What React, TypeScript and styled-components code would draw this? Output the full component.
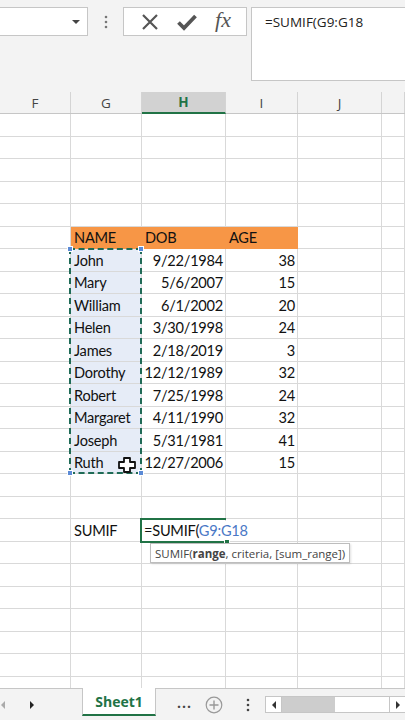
import { FC } from "react";
import styled, { createGlobalStyle } from "styled-components";

const GREEN = "#217346";
const ROW_H = 22.5;

const GlobalStyle = createGlobalStyle`
  html, body { margin: 0; padding: 0; background: #f3f3f3; }
  * { box-sizing: border-box; }
`;

type CellData = { text?: string; align?: "left" | "right"; kind?: "head" | "sel" };

const people: [string, string, string][] = [
  ["John", "9/22/1984", "38"],
  ["Mary", "5/6/2007", "15"],
  ["William", "6/1/2002", "20"],
  ["Helen", "3/30/1998", "24"],
  ["James", "2/18/2019", "3"],
  ["Dorothy", "12/12/1989", "32"],
  ["Robert", "7/25/1998", "24"],
  ["Margaret", "4/11/1990", "32"],
  ["Joseph", "5/31/1981", "41"],
  ["Ruth", "12/27/2006", "15"],
];

const buildRows = (): CellData[][] => {
  const rows: CellData[][] = [];
  for (let r = 0; r < 26; r++) {
    const row: CellData[] = [{}, {}, {}, {}, {}, {}];
    if (r === 5) {
      row[1] = { text: "NAME", kind: "head" };
      row[2] = { text: "DOB", kind: "head" };
      row[3] = { text: "AGE", kind: "head" };
    }
    if (r >= 6 && r <= 15) {
      const p = people[r - 6];
      row[1] = { text: p[0], kind: "sel" };
      row[2] = { text: p[1], align: "right" };
      row[3] = { text: p[2], align: "right" };
    }
    if (r === 18) row[1] = { text: "SUMIF" };
    rows.push(row);
  }
  return rows;
};

const Screen = styled.div`
  width: 405px;
  height: 720px;
  overflow: hidden;
  display: flex;
  flex-direction: column;
  background: #f3f3f3;
  font-family: "Open Sans", "Liberation Sans", sans-serif;
`;

const Toolbar = styled.div`
  height: 92px;
  flex: none;
  display: flex;
  align-items: flex-start;
  padding-top: 7px;
  position: relative;
`;

const NameBox = styled.div`
  width: 90px;
  height: 29px;
  margin-left: -2px;
  background: #fff;
  border: 1px solid #c6c6c6;
  display: flex;
  align-items: center;
  justify-content: flex-end;
  padding-right: 7px;
`;

const Dots = styled.div`
  width: 35px;
  height: 29px;
  display: flex;
  align-items: center;
  justify-content: center;
`;

const FxBox = styled.div`
  width: 124px;
  height: 29px;
  background: #fff;
  border: 1px solid #c6c6c6;
  display: flex;
  align-items: center;
  justify-content: space-around;
  padding: 0 6px 0 8px;
`;

const FxText = styled.span`
  font-family: "Liberation Serif", "DejaVu Serif", serif;
  font-style: italic;
  font-size: 22px;
  color: #555;
  line-height: 1;
  margin-top: -3px;
`;

const FormulaBox = styled.div`
  margin-left: 4px;
  flex: 1;
  height: 74px;
  margin-right: -3px;
  background: #fff;
  border: 1px solid #c6c6c6;
  padding: 5px 0 0 13px;
  font-size: 13.5px;
  color: #222;
`;

const ColHeaders = styled.div`
  height: 22px;
  flex: none;
  display: grid;
  grid-template-columns: 71px 71px 84px 72px 84px 1fr;
  border-bottom: 1px solid #c6c6c6;
`;

const ColHead = styled.div<{ $active?: boolean }>`
  display: flex;
  align-items: center;
  justify-content: center;
  font-size: 13.5px;
  color: ${(p) => (p.$active ? GREEN : "#444")};
  font-weight: ${(p) => (p.$active ? 700 : 400)};
  background: ${(p) => (p.$active ? "#d2d2d2" : "#f3f3f3")};
  border-right: 1px solid #d4d4d4;
  border-bottom: ${(p) => (p.$active ? `2px solid ${GREEN}` : "none")};
  margin-bottom: ${(p) => (p.$active ? "-1px" : "0")};
`;

const SheetBody = styled.div`
  flex: 1;
  position: relative;
  overflow: hidden;
  background: #fff;
`;

const Grid = styled.div`
  display: grid;
  grid-template-columns: 71px 71px 84px 72px 84px 1fr;
  grid-auto-rows: ${ROW_H}px;
  font-family: "Lato", "Liberation Sans", sans-serif;
  font-size: 14.6px;
  letter-spacing: -0.25px;
  color: #111;
`;

const Cell = styled.div<{ $align?: string; $kind?: string }>`
  border-right: 1px solid ${(p) => (p.$kind === "head" ? "#f79646" : "#d9d9d9")};
  border-bottom: 1px solid ${(p) => (p.$kind === "head" ? "#f79646" : "#d9d9d9")};
  background: ${(p) =>
    p.$kind === "head" ? "#f79646" : p.$kind === "sel" ? "#e6ecf7" : "#fff"};
  display: flex;
  align-items: flex-end;
  justify-content: ${(p) => (p.$align === "right" ? "flex-end" : "flex-start")};
  padding: 0 2px 0 3px;
  white-space: nowrap;
  line-height: 20px;
`;

const Selection = styled.div`
  position: absolute;
  left: 69px;
  top: ${6 * ROW_H - 1}px;
  width: 73px;
  height: ${10 * ROW_H + 1}px;
  border: 2px dashed #1f6b56;
  pointer-events: none;
`;

const Handle = styled.div<{ $x: "l" | "r"; $y: "t" | "b"; $color?: string }>`
  position: absolute;
  width: 6px;
  height: 6px;
  background: ${(p) => p.$color ?? "#5b8ad6"};
  border: 1px solid #fff;
  ${(p) => (p.$x === "l" ? "left: -4px;" : "right: -4px;")}
  ${(p) => (p.$y === "t" ? "top: -4px;" : "bottom: -4px;")}
`;

const Cursor = styled.svg`
  position: absolute;
  left: 118px;
  top: ${457 - 114}px;
`;

const EditCell = styled.div`
  position: absolute;
  left: 140px;
  top: ${18 * ROW_H - 1}px;
  width: 86px;
  height: ${ROW_H + 2}px;
  border: 2px solid ${GREEN};
  border-right: none;
  font-family: "Lato", "Liberation Sans", sans-serif;
  font-size: 14.6px;
  letter-spacing: -0.25px;
  color: #111;
  display: flex;
  align-items: flex-end;
  padding: 0 0 0 2px;
  line-height: 20px;
  white-space: nowrap;
`;

const EditText = styled.span`
  background: #fff;
  padding-right: 4px;
`;

const RefText = styled.span`
  color: #4a78c6;
`;

const Tooltip = styled.div`
  position: absolute;
  left: 150px;
  top: ${543 - 114}px;
  height: 20px;
  padding: 0 4px;
  background: #fff;
  border: 1px solid #bdbdbd;
  font-family: "Open Sans", "Liberation Sans", sans-serif;
  font-size: 11.5px;
  color: #444;
  display: flex;
  align-items: center;
  white-space: nowrap;
  box-shadow: 1px 1px 2px rgba(0, 0, 0, 0.12);
`;

const TabBar = styled.div`
  height: 32px;
  flex: none;
  display: flex;
  align-items: stretch;
  background: #f3f3f3;
  border-top: 1px solid #c6c6c6;
`;

const NavArrows = styled.div`
  width: 82px;
  display: flex;
  align-items: center;
  gap: 25px;
  padding-left: 1px;
`;

const SheetTab = styled.div`
  width: 74px;
  margin-top: -1px;
  background: #fff;
  border-left: 1px solid #c6c6c6;
  border-right: 1px solid #c6c6c6;
  border-bottom: 2px solid ${GREEN};
  margin-bottom: 4px;
  display: flex;
  align-items: center;
  justify-content: center;
  font-family: "Open Sans", "Liberation Sans", sans-serif;
  font-weight: 700;
  font-size: 14px;
  color: ${GREEN};
`;

const TabTools = styled.div`
  display: flex;
  align-items: center;
  padding-left: 21px;
  color: #555;
`;

const Ellipsis = styled.span`
  width: 24px;
  font-size: 14px;
  font-weight: 700;
  letter-spacing: 1px;
  color: #444;
  margin-top: -4px;
`;

const Spacer = styled.span<{ $w: number }>`
  width: ${(p) => p.$w}px;
`;

const Scroll = styled.div`
  margin-left: auto;
  align-self: center;
  width: 141px;
  height: 17px;
  display: flex;
  border: 1px solid #c6c6c6;
  background: #fff;
  margin-right: -1px;
`;

const ScrollBtn = styled.div`
  width: 16px;
  display: flex;
  align-items: center;
  justify-content: center;
  background: #fff;
  border-left: 1px solid #c6c6c6;
  border-right: 1px solid #c6c6c6;
  &:first-child { border-left: none; }
  &:last-child { border-right: none; }
`;

const Thumb = styled.div`
  width: 53px;
  background: #cdcdcd;
`;

const Track = styled.div`
  flex: 1;
`;

const Tri: FC<{ dir: "l" | "r" | "d"; color?: string; size?: number }> = ({ dir, color = "#333", size = 5 }) => {
  const s = size;
  const pts =
    dir === "l" ? `${s},0 0,${s} ${s},${2 * s}` : dir === "r" ? `0,0 ${s},${s} 0,${2 * s}` : `0,0 ${2 * s},0 ${s},${s}`;
  const w = dir === "d" ? 2 * s : s;
  const h = dir === "d" ? s : 2 * s;
  return (
    <svg width={w} height={h} viewBox={`0 0 ${w} ${h}`}>
      <polygon points={pts} fill={color} />
    </svg>
  );
};

const VDots: FC<{ color?: string }> = ({ color = "#666" }) => (
  <svg width="4" height="14" viewBox="0 0 4 14">
    <circle cx="2" cy="2" r="1.3" fill={color} />
    <circle cx="2" cy="7" r="1.3" fill={color} />
    <circle cx="2" cy="12" r="1.3" fill={color} />
  </svg>
);

const App: FC = () => {
  const rows = buildRows();
  return (
    <>
      <GlobalStyle />
      <Screen>
        <Toolbar>
          <NameBox>
            <Tri dir="d" color="#444" size={4} />
          </NameBox>
          <Dots>
            <VDots color="#777" />
          </Dots>
          <FxBox>
            <svg width="18" height="18" viewBox="0 0 18 18">
              <path d="M2 2 L16 16 M16 2 L2 16" stroke="#555" strokeWidth="2.2" />
            </svg>
            <svg width="20" height="18" viewBox="0 0 20 18">
              <path d="M1.5 9.5 L7 15 L18.5 3" stroke="#555" strokeWidth="3.8" fill="none" />
            </svg>
            <FxText>fx</FxText>
          </FxBox>
          <FormulaBox>=SUMIF(G9:G18</FormulaBox>
        </Toolbar>

        <ColHeaders>
          {["F", "G", "H", "I", "J", ""].map((c) => (
            <ColHead key={c || "k"} $active={c === "H"}>
              {c}
            </ColHead>
          ))}
        </ColHeaders>

        <SheetBody>
          <Grid>
            {rows.map((row, r) =>
              row.map((cell, c) => (
                <Cell key={`${r}-${c}`} $align={cell.align} $kind={cell.kind}>
                  {cell.text}
                </Cell>
              ))
            )}
          </Grid>

          <Selection>
            <Handle $x="l" $y="t" />
            <Handle $x="r" $y="t" />
            <Handle $x="l" $y="b" />
            <Handle $x="r" $y="b" />
          </Selection>

          <Cursor width="18" height="16" viewBox="0 0 18 16">
            <path
              d="M6 1 H12 V5 H17 V11 H12 V15 H6 V11 H1 V5 H6 Z"
              fill="#fff"
              stroke="#111"
              strokeWidth="1.8"
              strokeLinejoin="round"
            />
          </Cursor>

          <EditCell>
            <EditText>
              =SUMIF(<RefText>G9:G18</RefText>
            </EditText>
            <Handle $x="r" $y="b" $color={GREEN} />
          </EditCell>

          <Tooltip>
            SUMIF(<b>range</b>, criteria, [sum_range])
          </Tooltip>
        </SheetBody>

        <TabBar>
          <NavArrows>
            <Tri dir="l" color="#aaa" size={4} />
            <Tri dir="r" color="#222" size={4} />
          </NavArrows>
          <SheetTab>Sheet1</SheetTab>
          <TabTools>
            <Ellipsis>...</Ellipsis>
            <svg width="18" height="18" viewBox="0 0 18 18" style={{ marginLeft: 4 }}>
              <circle cx="9" cy="9" r="7.8" stroke="#999" strokeWidth="1.2" fill="none" />
              <path d="M9 4.5 V13.5 M4.5 9 H13.5" stroke="#999" strokeWidth="1.4" />
            </svg>
            <Spacer $w={23} />
            <VDots color="#444" />
          </TabTools>
          <Scroll>
            <ScrollBtn>
              <Tri dir="l" color="#333" size={4} />
            </ScrollBtn>
            <Thumb />
            <Track />
            <ScrollBtn>
              <Tri dir="r" color="#333" size={4} />
            </ScrollBtn>
          </Scroll>
        </TabBar>
      </Screen>
    </>
  );
};

export default App;
